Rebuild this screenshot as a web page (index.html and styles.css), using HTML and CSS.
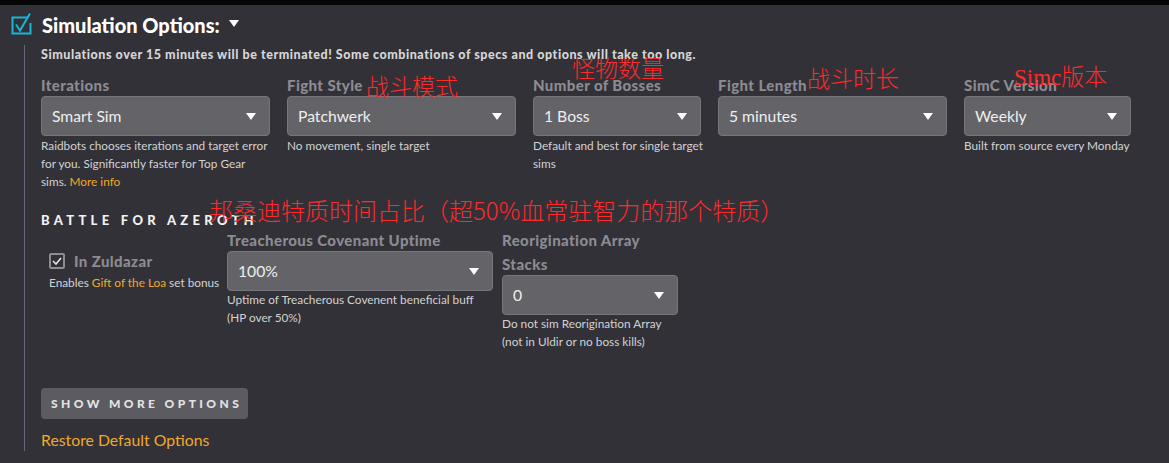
FILE: index.html
```html
<!DOCTYPE html>
<html>
<head>
<meta charset="utf-8">
<link rel="stylesheet" href="styles.css">
</head>
<body>
<div class="topbar"></div>
<div class="page">
  <div class="header">
    <svg class="main-check" width="22" height="22" viewBox="0 0 22 22">
      <path d="M17 4.5 H1.5 V20.5 H19.5 V10" fill="none" stroke="#19b5d3" stroke-width="2"/>
      <path d="M5 11.5 L9 17.5 L19 0.5" fill="none" stroke="#19b5d3" stroke-width="2"/>
    </svg>
    <h1 class="title">Simulation Options:</h1>
    <span class="caret-title"></span>
  </div>
  <div class="body">
    <p class="warning">Simulations over 15 minutes will be terminated! Some combinations of specs and options will take too long.</p>
    <div class="grid">
      <div class="field">
        <div class="label">Iterations</div>
        <div class="select"><span>Smart Sim</span><i class="caret"></i></div>
        <div class="help">Raidbots chooses iterations and target error<br>for you. Significantly faster for Top Gear<br>sims. <span class="link">More info</span></div>
      </div>
      <div class="field">
        <div class="label">Fight Style</div>
        <div class="select"><span>Patchwerk</span><i class="caret"></i></div>
        <div class="help">No movement, single target</div>
      </div>
      <div class="field">
        <div class="label">Number of Bosses</div>
        <div class="select"><span>1 Boss</span><i class="caret"></i></div>
        <div class="help">Default and best for single target<br>sims</div>
      </div>
      <div class="field">
        <div class="label">Fight Length</div>
        <div class="select"><span>5 minutes</span><i class="caret"></i></div>
      </div>
      <div class="field">
        <div class="label">SimC Version</div>
        <div class="select"><span>Weekly</span><i class="caret"></i></div>
        <div class="help">Built from source every Monday</div>
      </div>
    </div>

    <h2 class="section">BATTLE FOR AZEROTH</h2>
    <div class="bfa">
      <div class="zul">
        <div class="check-row">
          <span class="box">
            <svg width="10" height="8" viewBox="0 0 10 8"><path d="M1 4 L4 7 L9 1" fill="none" stroke="#e6e6e6" stroke-width="1.6"/></svg>
          </span>
          <span class="check-label">In Zuldazar</span>
        </div>
        <div class="help">Enables <span class="link">Gift of the Loa</span> set bonus</div>
      </div>
      <div class="field tc">
        <div class="label">Treacherous Covenant Uptime</div>
        <div class="select"><span>100%</span><i class="caret"></i></div>
        <div class="help">Uptime of Treacherous Covenent beneficial buff<br>(HP over 50%)</div>
      </div>
      <div class="field ra">
        <div class="label">Reorigination Array<br>Stacks</div>
        <div class="select"><span>0</span><i class="caret"></i></div>
        <div class="help">Do not sim Reorigination Array<br>(not in Uldir or no boss kills)</div>
      </div>
    </div>

    <button class="more">SHOW MORE OPTIONS</button>
    <div class="restore">Restore Default Options</div>
  </div>

  <span class="note n1">战斗模式</span>
  <span class="note n2">怪物数量</span>
  <span class="note n3">战斗时长</span>
  <span class="note n4">Simc版本</span>
  <span class="note n5">邦桑迪特质时间占比（超50%血常驻智力的那个特质）</span>
</div>
</body>
</html>
```

FILE: styles.css
```css
html, body {
  margin: 0;
  padding: 0;
  background: #323138;
  font-family: Lato, "Noto Sans", sans-serif;
  color: #dcdcdc;
}
.topbar {
  height: 5px;
  background: #060606;
}
.page {
  position: relative;
  height: 458px;
}
.header {
  display: flex;
  align-items: center;
  height: 40px;
  padding-left: 11px;
}
.main-check {
  display: block;
  margin-top: -2px;
}
.title {
  margin: 0 0 0 9px;
  font-size: 20px;
  font-weight: 900;
  color: #ffffff;
  line-height: 24px;
}
.caret-title {
  width: 0;
  height: 0;
  margin-left: 9px;
  margin-top: -3px;
  border-left: 5.5px solid transparent;
  border-right: 5.5px solid transparent;
  border-top: 7px solid #ffffff;
}
.body {
  margin-left: 24px;
  border-left: 1px solid #66657a;
  padding-left: 16px;
  padding-bottom: 3px;
  height: 403px;
}
.warning {
  margin: 0;
  padding-top: 2px;
  font-size: 12.5px;
  font-weight: 900;
  letter-spacing: 0.55px;
  line-height: 16px;
  color: #d6d6d6;
  white-space: nowrap;
}
.grid {
  display: grid;
  grid-template-columns: 229px 229px 168px 229px 167px;
  column-gap: 17px;
  margin-top: 10px;
  align-items: start;
}
.label {
  font-size: 15px;
  font-weight: 900;
  letter-spacing: 0.4px;
  color: #8c8b91;
  line-height: 24px;
  margin-bottom: -1px;
  white-space: nowrap;
}
.select {
  box-sizing: border-box;
  height: 40px;
  background: #646368;
  border: 1px solid #77767c;
  border-radius: 4px;
  display: flex;
  align-items: center;
  justify-content: space-between;
  padding: 0 13px 0 10px;
  font-size: 15.7px;
  color: #efefef;
}
.caret {
  width: 0;
  height: 0;
  border-left: 5.5px solid transparent;
  border-right: 5.5px solid transparent;
  border-top: 7px solid #ffffff;
}
.help {
  font-size: 11.8px;
  line-height: 18px;
  color: #d2d2d2;
  margin-top: 1px;
  white-space: nowrap;
}
.link {
  color: #f0a92a;
}
.section {
  margin: 18px 0 0 0;
  font-size: 13px;
  font-weight: 900;
  letter-spacing: 4.3px;
  line-height: 22px;
  color: #f2f2f2;
}
.bfa {
  display: flex;
  align-items: flex-start;
  margin-top: -3px;
}
.zul {
  width: 178px;
  padding-left: 8px;
  padding-top: 23px;
}
.check-row {
  display: flex;
  align-items: center;
  height: 20px;
}
.box {
  box-sizing: border-box;
  width: 16px;
  height: 16px;
  border: 2px solid #8d8c92;
  border-radius: 2px;
  display: flex;
  align-items: center;
  justify-content: center;
}
.check-label {
  margin-left: 9px;
  font-size: 15px;
  font-weight: 900;
  letter-spacing: 0.4px;
  color: #8c8b91;
}
.zul .help {
  margin-top: 3px;
}
.tc {
  width: 266px;
}
.tc .help {
  margin-top: 0;
}
.ra {
  width: 176px;
  margin-left: 9px;
}
.ra .help {
  margin-top: 0;
}
.more {
  display: block;
  margin-top: 37px;
  height: 31px;
  width: 207px;
  border: none;
  border-radius: 4px;
  background: #5c5b61;
  color: #e2e2e2;
  font-family: Lato, sans-serif;
  font-size: 12px;
  font-weight: 900;
  letter-spacing: 3.4px;
  text-align: left;
  padding: 0 0 0 10px;
}
.restore {
  margin-top: 11px;
  font-size: 15.8px;
  line-height: 20px;
  color: #f0a92a;
}
.note {
  position: absolute;
  color: #ff2a2a;
  font-family: "Noto Sans CJK SC", serif;
  font-weight: 300;
  font-size: 23px;
  line-height: 24px;
  white-space: nowrap;
}
.n1 { left: 366px; top: 68px; }
.n2 { left: 572px; top: 50px; }
.n3 { left: 807px; top: 60px; }
.n4 { left: 1014px; top: 61px; font-family: "Liberation Serif", "Noto Sans CJK SC", serif; }
.n5 { left: 209px; top: 193px; font-size: 24px; }
```
